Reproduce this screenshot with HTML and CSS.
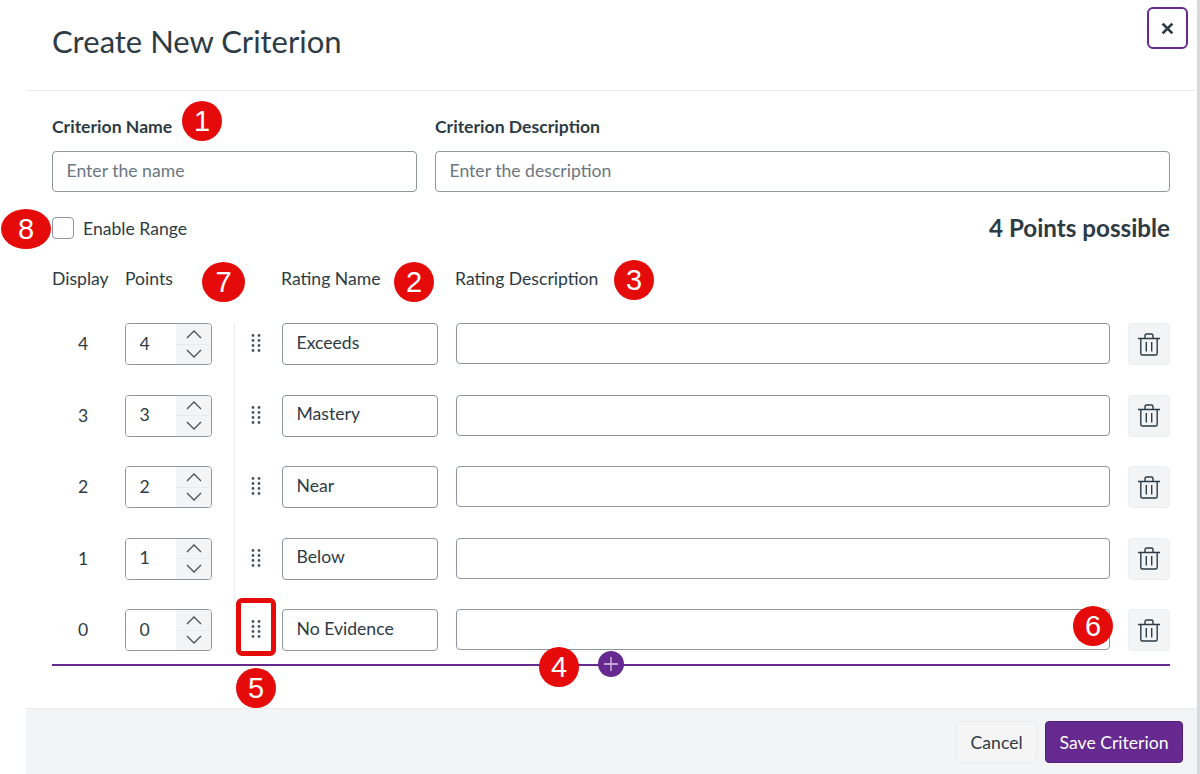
FILE: index.html
```html
<!DOCTYPE html>
<html>
  <head>
    <meta charset="utf-8">
    <title>Create New Criterion</title>
    <link rel="stylesheet" href="styles.css">
  </head>
  <body>
    <svg class="defs" width="0" height="0">
      <symbol id="dots" viewBox="0 0 10 18">
        <circle cx="2" cy="2" r="1.4"/><circle cx="8" cy="2" r="1.4"/>
        <circle cx="2" cy="7" r="1.4"/><circle cx="8" cy="7" r="1.4"/>
        <circle cx="2" cy="12" r="1.4"/><circle cx="8" cy="12" r="1.4"/>
        <circle cx="2" cy="17" r="1.4"/><circle cx="8" cy="17" r="1.4"/>
      </symbol>
      <symbol id="trash" viewBox="0 0 22 23">
        <path d="M0 5.5h22M7 5.5V2.6Q7 1 8.6 1h4.8Q15 1 15 2.6v2.9M2.8 5.5v15Q2.8 22 4.4 22h13.2q1.600 0 1.600-1.500v-15M8.300 9v9.500M13.700 9v9.500"/>
      </symbol>
      <symbol id="up" viewBox="0 0 18 10">
        <path d="M2 9l7-7 7 7"/>
      </symbol>
      <symbol id="down" viewBox="0 0 18 10">
        <path d="M2 1l7 7 7-7"/>
      </symbol>
    </svg>

    <div class="modal">
      <header class="modal-header">
        <h1>Create New Criterion</h1>
        <button class="close-btn">
          <svg width="13" height="13" viewBox="0 0 12 12"><path d="M1.500 1.500l9 9M10.500 1.500l-9 9"/></svg>
        </button>
      </header>

      <div class="modal-body">
        <div class="fields">
          <label class="field name-field">
            <span>Criterion Name</span>
            <input type="text" placeholder="Enter the name">
          </label>
          <label class="field desc-field">
            <span>Criterion Description</span>
            <input type="text" placeholder="Enter the description">
          </label>
        </div>

        <div class="range-row">
          <label class="range-check"><span class="checkbox"></span>Enable Range</label>
          <div class="possible">4 Points possible</div>
        </div>

        <div class="col-heads">
          <span class="head-display">Display</span>
          <span class="head-points">Points</span>
          <span class="head-rating">Rating Name</span>
          <span>Rating Description</span>
        </div>

        <div class="rating">
          <div class="display">4</div>
          <div class="stepper">
            <input type="text" value="4">
            <div class="arrows">
              <button><svg width="18" height="10"><use href="#up"/></svg></button>
              <button><svg width="18" height="10"><use href="#down"/></svg></button>
            </div>
          </div>
          <div class="drag"><svg width="10" height="19"><use href="#dots"/></svg></div>
          <input class="rating-name" type="text" value="Exceeds">
          <input class="rating-desc" type="text">
          <button class="trash"><svg width="22" height="23"><use href="#trash"/></svg></button>
        </div>

        <div class="rating">
          <div class="display">3</div>
          <div class="stepper">
            <input type="text" value="3">
            <div class="arrows">
              <button><svg width="18" height="10"><use href="#up"/></svg></button>
              <button><svg width="18" height="10"><use href="#down"/></svg></button>
            </div>
          </div>
          <div class="drag"><svg width="10" height="19"><use href="#dots"/></svg></div>
          <input class="rating-name" type="text" value="Mastery">
          <input class="rating-desc" type="text">
          <button class="trash"><svg width="22" height="23"><use href="#trash"/></svg></button>
        </div>

        <div class="rating">
          <div class="display">2</div>
          <div class="stepper">
            <input type="text" value="2">
            <div class="arrows">
              <button><svg width="18" height="10"><use href="#up"/></svg></button>
              <button><svg width="18" height="10"><use href="#down"/></svg></button>
            </div>
          </div>
          <div class="drag"><svg width="10" height="19"><use href="#dots"/></svg></div>
          <input class="rating-name" type="text" value="Near">
          <input class="rating-desc" type="text">
          <button class="trash"><svg width="22" height="23"><use href="#trash"/></svg></button>
        </div>

        <div class="rating before-last">
          <div class="display">1</div>
          <div class="stepper">
            <input type="text" value="1">
            <div class="arrows">
              <button><svg width="18" height="10"><use href="#up"/></svg></button>
              <button><svg width="18" height="10"><use href="#down"/></svg></button>
            </div>
          </div>
          <div class="drag"><svg width="10" height="19"><use href="#dots"/></svg></div>
          <input class="rating-name" type="text" value="Below">
          <input class="rating-desc" type="text">
          <button class="trash"><svg width="22" height="23"><use href="#trash"/></svg></button>
        </div>

        <div class="rating last">
          <div class="display">0</div>
          <div class="stepper">
            <input type="text" value="0">
            <div class="arrows">
              <button><svg width="18" height="10"><use href="#up"/></svg></button>
              <button><svg width="18" height="10"><use href="#down"/></svg></button>
            </div>
          </div>
          <div class="drag"><svg width="10" height="19"><use href="#dots"/></svg></div>
          <input class="rating-name" type="text" value="No Evidence">
          <input class="rating-desc" type="text">
          <button class="trash"><svg width="22" height="23"><use href="#trash"/></svg></button>
        </div>

        <div class="add-line">
          <button class="add-btn">
            <svg width="14" height="14" viewBox="0 0 14 14"><path d="M7 0v14M0 7h14"/></svg>
          </button>
        </div>
      </div>

      <footer class="modal-footer">
        <button class="btn">Cancel</button>
        <button class="btn btn-save">Save Criterion</button>
      </footer>
    </div>

    <!-- callouts drawn over the screenshot -->
    <div class="callout c1">1</div>
    <div class="callout c2">2</div>
    <div class="callout c3">3</div>
    <div class="callout c4">4</div>
    <div class="callout c5">5</div>
    <div class="callout c6">6</div>
    <div class="callout c7">7</div>
    <div class="callout c8">8</div>
    <div class="drag-highlight"></div>
  </body>
</html>
```

FILE: styles.css
```css
* {
  box-sizing: border-box;
  font-family: Lato, sans-serif;
}

html, body {
  margin: 0;
  height: 774px;
  overflow: hidden;
  background: white;
}

.defs {
  position: absolute;
}

.modal {
  position: relative;
  height: 774px;
  margin-left: 26px;
  border-right: 3px solid #d9d9d9;
  display: flex;
  flex-direction: column;
  color: #2d3b45;
}

input {
  height: 42px;
  padding: 0 13.500px 2px;
  border: 1px solid #8b969e;
  border-radius: 4px;
  font-size: 17.600px;
  color: #2d3b45;
  background: white;
  outline: none;
}

input::placeholder {
  color: #6b7780;
  opacity: 1;
}

button {
  border: none;
  padding: 0;
  background: none;
}

.modal-header {
  height: 91px;
  flex: none;
  padding-left: 26px;
  border-bottom: 1px solid #e8eaec;
}

.modal-header h1 {
  margin: 0;
  padding-top: 22px;
  font-size: 31px;
  line-height: 38px;
  font-weight: 400;
}

.close-btn {
  position: absolute;
  top: 7px;
  right: 9px;
  width: 41px;
  height: 42px;
  display: flex;
  align-items: center;
  justify-content: center;
  border: 2px solid #66298f;
  border-radius: 6px;
}

.close-btn path {
  stroke: #2d3b45;
  stroke-width: 2.600;
  fill: none;
}

.modal-body {
  flex: 1;
  padding: 24px 27px 0 26px;
}

.fields {
  display: flex;
  gap: 18px;
}

.field {
  display: flex;
  flex-direction: column;
}

.field span {
  font-size: 17.600px;
  line-height: 24px;
  font-weight: 700;
  margin-bottom: 12px;
}

.field input {
  height: 41px;
}

.name-field {
  width: 365px;
}

.desc-field {
  flex: 1;
}

.range-row {
  display: flex;
  align-items: center;
  justify-content: space-between;
  height: 24px;
  margin-top: 24px;
  margin-bottom: 1px;
}

.range-check {
  display: flex;
  align-items: center;
  gap: 9px;
  font-size: 17.600px;
}

.checkbox {
  width: 22px;
  height: 22px;
  border: 1px solid #8b969e;
  border-radius: 4px;
}

.possible {
  font-size: 24.200px;
  font-weight: 700;
  margin-bottom: 2px;
}

.col-heads {
  display: flex;
  margin-top: 27px;
  height: 24px;
  line-height: 24px;
  font-size: 17.600px;
}

.head-display {
  width: 73px;
}

.head-points {
  width: 156px;
}

.head-rating {
  width: 174px;
}

.rating {
  display: flex;
  height: 71.500px;
  align-items: flex-start;
}

.col-heads + .rating {
  margin-top: 32px;
}

.rating.last {
  height: 55px;
}

.display {
  width: 62px;
  margin-right: 11px;
  text-align: center;
  line-height: 41px;
  font-size: 17.600px;
}

.stepper {
  width: 87px;
  height: 42px;
  display: flex;
  border: 1px solid #8b969e;
  border-radius: 4px;
  overflow: hidden;
}

.stepper input {
  width: 50px;
  height: 40px;
  border: none;
  border-radius: 0;
}

.arrows {
  flex: 1;
  display: flex;
  flex-direction: column;
  background: #f3f4f6;
}

.arrows button {
  flex: 1;
  display: flex;
  align-items: center;
  justify-content: center;
}

.arrows button + button {
  border-top: 1px solid #e8eaec;
}

.arrows svg {
  fill: none;
  stroke: #47525a;
  stroke-width: 1.300;
}

.drag {
  align-self: stretch;
  width: 48px;
  margin-left: 22px;
  border-left: 1px solid #e8eaec;
  padding: 10px 0 0 16px;
}

.before-last .drag {
  margin-bottom: 9px;
}

.last .drag {
  border-left-color: transparent;
}

.drag svg {
  display: block;
  fill: #4b565e;
}

.rating-name {
  width: 156px;
  margin-right: 18px;
  padding-bottom: 4px;
}

.rating-desc {
  flex: 1;
  height: 41px;
}

.trash {
  width: 42px;
  height: 42px;
  margin-left: 18px;
  display: flex;
  align-items: center;
  justify-content: center;
  background: #f3f4f6;
  border: 1px solid #eceef0;
  border-radius: 4px;
}

.trash svg {
  fill: none;
  stroke: #2d3b45;
  stroke-width: 1.400;
}

.add-line {
  position: relative;
  height: 2px;
  background: #66298f;
}

.add-btn {
  position: absolute;
  left: 546px;
  top: -13px;
  width: 26px;
  height: 26px;
  display: flex;
  align-items: center;
  justify-content: center;
  border-radius: 50%;
  background: #66298f;
}

.add-btn path {
  stroke: #d9c9e6;
  stroke-width: 1.300;
}

.modal-footer {
  flex: none;
  height: 66px;
  display: flex;
  justify-content: flex-end;
  gap: 8px;
  padding: 12px 14px 0 0;
  background: #f3f4f6;
  border-top: 1px solid #e8eaec;
}

.btn {
  height: 42px;
  padding: 0 13.500px;
  font-size: 17.600px;
  color: #2d3b45;
  background: #f5f5f5;
  border: 1px solid #e8eaec;
  border-radius: 4px;
}

.btn-save {
  color: white;
  background: #66298f;
  border-color: #571f7d;
}

.callout {
  position: absolute;
  width: 40px;
  height: 40px;
  display: flex;
  align-items: center;
  justify-content: center;
  border-radius: 50%;
  background: #e60b0b;
  color: white;
  font-family: "Liberation Sans", Arial, sans-serif;
  font-size: 29px;
}

.c1 { left: 182px; top: 101px; }
.c2 { left: 394px; top: 262px; }
.c3 { left: 614px; top: 260px; }
.c4 { left: 539px; top: 647px; }
.c5 { left: 236px; top: 668px; }
.c6 { left: 1073px; top: 606px; }
.c7 { left: 202px; top: 262px; width: 43px; }
.c8 { left: 1px; top: 209px; width: 50px; }

.drag-highlight {
  position: absolute;
  left: 236px;
  top: 598px;
  width: 40px;
  height: 58px;
  border: 5px solid #e60b0b;
  border-radius: 6px;
}
```
